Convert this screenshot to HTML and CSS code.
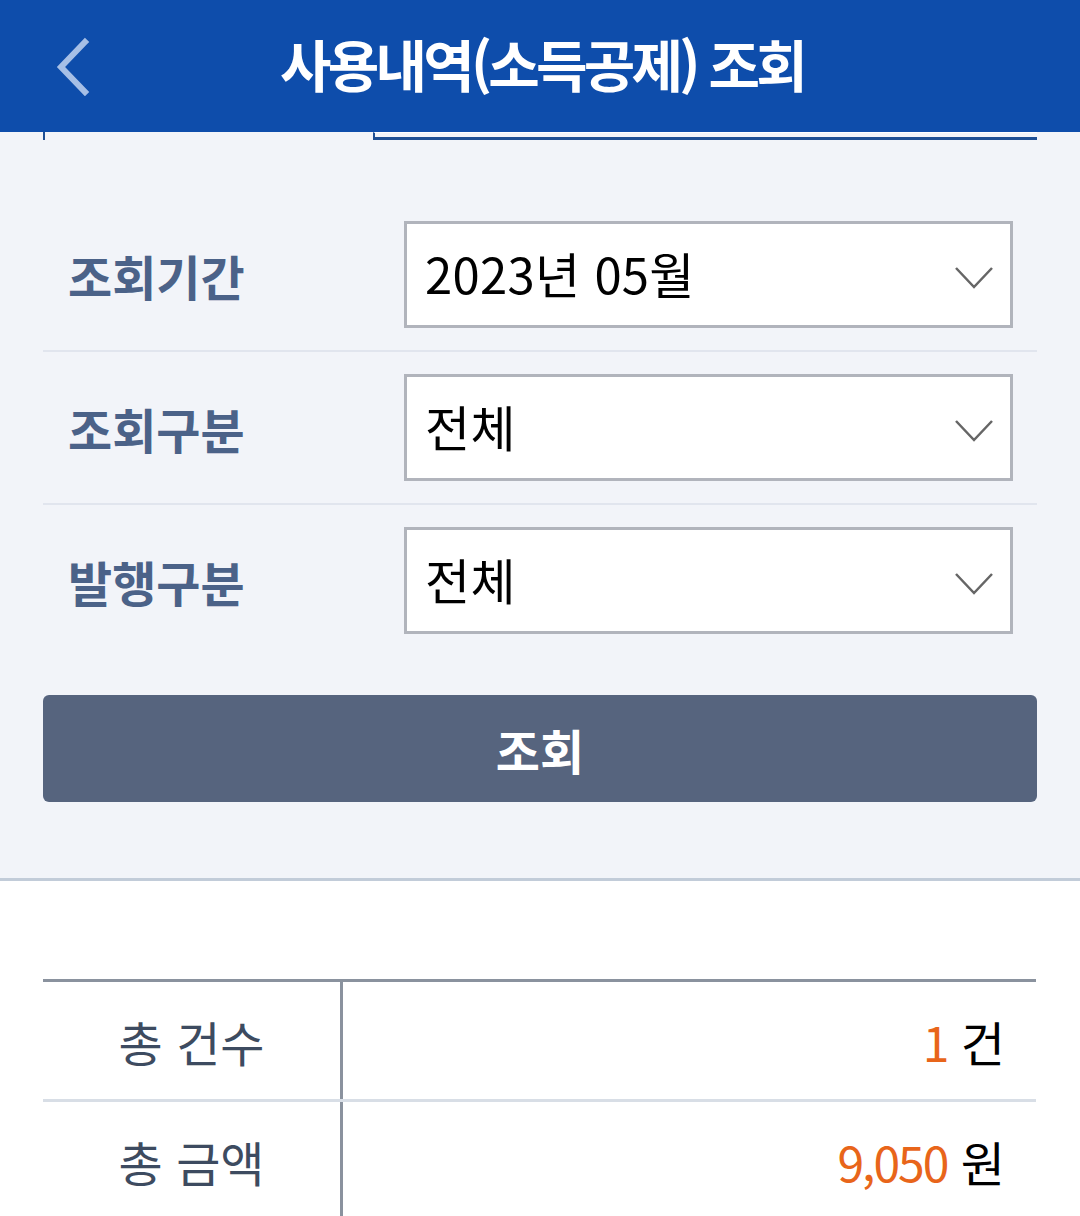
FILE: index.html
```html
<!DOCTYPE html>
<html lang="ko">
<head>
    <meta charset="UTF-8">
    <meta name="viewport" content="width=device-width, initial-scale=1.0">
    <title>사용내역(소득공제) 조회</title>
    <link rel="stylesheet" href="styles.css">
</head>
<body>
    <header class="top-bar">
        <a class="back-btn" href="#" aria-label="뒤로">
            <svg width="44" height="64" viewBox="0 0 44 64">
                <polyline points="32,10 8,35 32,60" fill="none" stroke="#a6bfe6" stroke-width="6" stroke-linecap="square"/>
            </svg>
        </a>
        <h1 class="title">사용내역(소득공제) 조회</h1>
        <span></span>
    </header>

    <section class="search">
        <div class="tabs">
            <div class="tab active"></div>
            <div class="tab"></div>
        </div>

        <div class="form">
            <div class="form-row">
                <label class="form-label">조회기간</label>
                <div class="select">
                    <span>2023년 05월</span>
                    <svg class="arrow" width="40" height="26" viewBox="0 0 40 26">
                        <polyline points="2,3 20,22 38,3" fill="none" stroke="#666" stroke-width="2.5"/>
                    </svg>
                </div>
            </div>
            <div class="form-row">
                <label class="form-label">조회구분</label>
                <div class="select">
                    <span>전체</span>
                    <svg class="arrow" width="40" height="26" viewBox="0 0 40 26">
                        <polyline points="2,3 20,22 38,3" fill="none" stroke="#666" stroke-width="2.5"/>
                    </svg>
                </div>
            </div>
            <div class="form-row">
                <label class="form-label">발행구분</label>
                <div class="select">
                    <span>전체</span>
                    <svg class="arrow" width="40" height="26" viewBox="0 0 40 26">
                        <polyline points="2,3 20,22 38,3" fill="none" stroke="#666" stroke-width="2.5"/>
                    </svg>
                </div>
            </div>
        </div>

        <button class="search-btn" type="button">조회</button>
    </section>

    <section class="summary">
        <table class="summary-table">
            <tr>
                <th>총 건수</th>
                <td><span class="num">1</span> 건</td>
            </tr>
            <tr>
                <th>총 금액</th>
                <td><span class="num">9,050</span> 원</td>
            </tr>
        </table>
    </section>
</body>
</html>
```

FILE: styles.css
```css
body {
    margin: 0;
    padding: 0;
    font-family: "Noto Sans CJK KR", "Noto Sans", sans-serif;
    background: #fff;
    color: #000;
}

/* header */
.top-bar {
    height: 132px;
    background: #0e4dab;
    display: grid;
    grid-template-columns: 1fr auto 1fr;
    align-items: center;
}

.back-btn {
    display: flex;
    align-items: center;
    padding-left: 53px;
    padding-bottom: 4px;
}

.title {
    margin: 0;
    color: #fff;
    font-size: 56px;
    font-weight: 700;
    letter-spacing: -3.8px;
    line-height: 1;
    padding-left: 4px;
    padding-bottom: 6px;
}

/* search area */
.search {
    background: #f2f4f9;
    padding: 0 43px 76px 43px;
    border-bottom: 3px solid #c2ccd9;
}

.tabs {
    display: flex;
    height: 8px;
}

.tab {
    box-sizing: border-box;
    border-left: 2px solid #1e4f94;
}

.tab.active {
    width: 330px;
}

.tab:not(.active) {
    flex: 1;
    border-top: 1px solid #fff;
    border-bottom: 3px solid #1e4f94;
}

.form {
    padding-top: 59px;
}

.form-row {
    display: flex;
    align-items: center;
    justify-content: space-between;
    padding: 22px 24px 22px 25px;
    border-bottom: 2px solid #e1e5ee;
}

.form-row:last-child {
    border-bottom: none;
}

.form-label {
    font-size: 48px;
    font-weight: 700;
    color: #4b6288;
    letter-spacing: 0;
}

.select {
    box-sizing: border-box;
    width: 609px;
    height: 107px;
    background: #fff;
    border: 3px solid #b1b4bc;
    display: flex;
    align-items: center;
    justify-content: space-between;
    padding: 0 16px 0 18px;
    font-size: 49px;
    letter-spacing: 0.3px;
    color: #000;
}

.select span {
    padding-bottom: 4px;
}

.arrow {
    margin-top: 6px;
}

.search-btn {
    display: block;
    width: 100%;
    height: 107px;
    margin-top: 39px;
    border: none;
    border-radius: 6px;
    background: #56647e;
    color: #fff;
    font-family: inherit;
    font-size: 48px;
    font-weight: 700;
    cursor: pointer;
}

/* summary */
.summary {
    padding: 98px 44px 0 43px;
}

.summary-table {
    width: 100%;
    border-collapse: collapse;
    border-top: 3px solid #8a929e;
}

.summary-table th,
.summary-table td {
    height: 117px;
    padding: 0;
    font-size: 48px;
    font-weight: 400;
}

.summary-table tr:first-child th,
.summary-table tr:first-child td {
    border-bottom: 3px solid #d8dee6;
}

.summary-table th {
    width: 297px;
    text-align: center;
    color: #3d4b60;
    border-right: 3px solid #8a929e;
}

.summary-table td {
    text-align: right;
    padding-right: 31px;
}

.num {
    color: #e8651a;
    letter-spacing: -2px;
}
```
